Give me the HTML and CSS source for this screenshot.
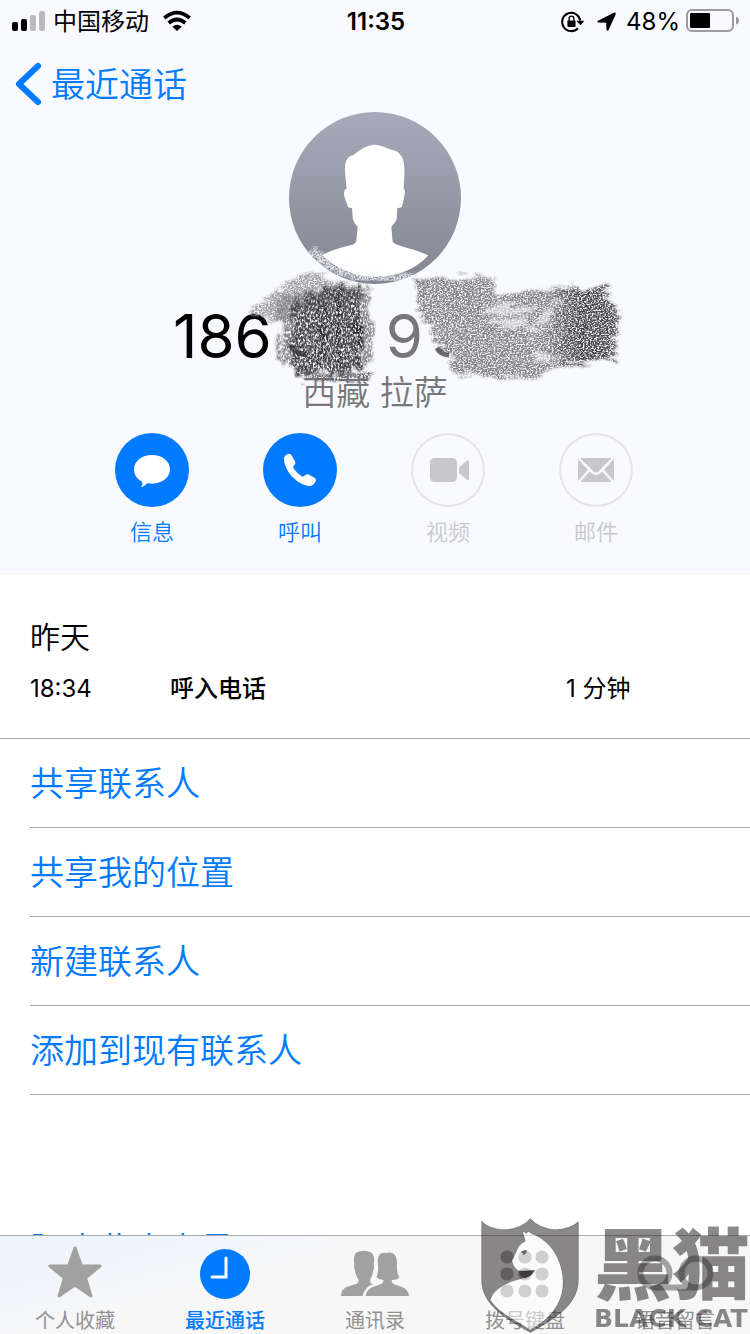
FILE: index.html
```html
<!DOCTYPE html>
<html lang="zh-CN">
<head>
<meta charset="utf-8">
<meta name="viewport" content="width=device-width, initial-scale=1">
<title>最近通话</title>
<link rel="stylesheet" href="styles.css">
</head>
<body>
<div class="app">
  <main class="content">
    <header class="profile">
      <div class="status">
        <div class="status-left">
          <svg class="signal" viewBox="0 0 34 20" aria-hidden="true"><rect x="0" y="11" width="6" height="9" rx="2"/><rect x="9" y="8" width="6" height="12" rx="2"/><rect class="dim" x="18" y="4" width="6" height="16" rx="2"/><rect class="dim" x="27" y="0" width="6" height="20" rx="2"/></svg>
          <span class="carrier">中国移动</span>
          <svg class="wifi" viewBox="0 0 84 60" aria-hidden="true"><path d="M42 60 L28 47 Q42 35 56 47Z"/><path class="arc" d="M4 21 Q42 -11 80 21M17 36 Q42 15 67 36"/></svg>
        </div>
        <time class="clock">11:35</time>
        <div class="status-right">
          <svg class="lock" viewBox="0 0 68 62" aria-hidden="true"><path class="ring" d="M50 51 A27 27 0 1 1 57 28"/><path d="M45 29 H69 L58 42Z"/><rect x="19" y="28" width="24" height="19" rx="2"/><path class="shackle" d="M24 29 V22 a7 7 0 0 1 14 0 V29"/></svg>
          <svg class="arrow" viewBox="0 0 56 56" aria-hidden="true"><path d="M2 31 Q-1 27 4 25 L50 2 Q57 0 55 7 L34 53 Q31 57 28 53 L27 32 Z"/></svg>
          <span class="percent">48%</span>
          <svg class="battery" viewBox="0 0 54 24" aria-hidden="true"><rect class="case" x="1" y="1" width="46" height="21" rx="5"/><rect x="4" y="4" width="20" height="15" rx="1"/><path class="cap" d="M50 7.500 q3 1 3 4 q0 3 -3 4Z"/></svg>
        </div>
      </div>
      <nav class="nav">
        <a class="back" href="#recents"><svg viewBox="0 0 24 42" aria-hidden="true"><path d="M21 3 L2 21 L21 39"/></svg><span>最近通话</span></a>
      </nav>
      <svg class="avatar" viewBox="57 36 516 516" role="img" aria-label="头像">
        <defs><linearGradient id="shade" x1="0" y1="0" x2="0" y2="1"><stop offset="0" stop-color="#a5abba"/><stop offset="1" stop-color="#828691"/></linearGradient></defs>
        <circle cx="315" cy="294" r="258" fill="url(#shade)"/>
        <path fill="#fff" d="M315 134C340 136 355 148 378 153C400 165 405 190 403 225L401 266Q406 268 404 280C402 300 398 312 395 322L382 325C380 340 382 355 378 363L364 380L368 425Q372 432 400 440Q440 450 475 466C440 505 390 530 315 530C250 530 190 500 157 465Q190 448 240 436Q258 432 259 422L263 380Q248 365 248 350L246 325L234 322C230 305 222 295 222 280Q222 268 230 266C226 230 222 200 228 185Q232 170 250 165C270 150 290 134 315 134Z"/>
      </svg>
      <h1 class="number"><span>186</span><span class="faded">9</span>
        <svg class="scribble" viewBox="0 0 380 150" aria-hidden="true">
          <defs>
            <filter id="chalk" x="-5%" y="-5%" width="110%" height="110%" color-interpolation-filters="sRGB">
              <feTurbulence type="fractalNoise" baseFrequency=".55 .7" numOctaves="4" seed="4" result="n"/>
              <feColorMatrix in="n" values="0 0 0 0 0 0 0 0 0 0 0 0 0 0 0 3.4 0 0 0 -1" result="holes"/>
              <feTurbulence type="fractalNoise" baseFrequency=".04 .25" numOctaves="3" seed="8" result="edge"/>
              <feDisplacementMap in="SourceGraphic" in2="edge" scale="20" xChannelSelector="R" yChannelSelector="G" result="rough"/>
              <feGaussianBlur in="rough" stdDeviation="1.2" result="soft"/>
              <feComposite in="soft" in2="holes" operator="in"/>
            </filter>
            <filter id="hatch" x="-5%" y="-5%" width="110%" height="110%" color-interpolation-filters="sRGB">
              <feTurbulence type="fractalNoise" baseFrequency=".6 .35" numOctaves="4" seed="12" result="n"/>
              <feColorMatrix in="n" values="0 0 0 0 0 0 0 0 0 0 0 0 0 0 0 3.2 0 0 0 -.85" result="holes"/>
              <feTurbulence type="fractalNoise" baseFrequency=".2 .05" numOctaves="3" seed="3" result="edge"/>
              <feDisplacementMap in="SourceGraphic" in2="edge" scale="20" xChannelSelector="R" yChannelSelector="G" result="rough"/>
              <feGaussianBlur in="rough" stdDeviation="1.2" result="soft"/>
              <feComposite in="soft" in2="holes" operator="in"/>
            </filter>
            <linearGradient id="fade"><stop offset="0" stop-color="#3c3c3e" stop-opacity="0"/><stop offset=".45" stop-color="#3c3c3e" stop-opacity=".9"/><stop offset="1" stop-color="#3c3c3e" stop-opacity=".8"/></linearGradient>
          </defs>
          <path class="erase" filter="url(#chalk)" d="M64 8Q100 44 168 38"/>
          <g filter="url(#chalk)">
            <path fill="#a0a0a4" d="M2 72L66 27L84 38L125 46L118 60L60 68L28 84Z"/>
            <path fill="#858588" d="M168 37H248L252 58L290 50L345 48L368 68L365 120L310 126L292 137H245L208 131L205 118L190 100L174 72Z"/>
            <path class="light" d="M240 70H290M244 82H280M284 95L316 60M290 118H312"/>
            <path fill="url(#fade)" d="M300 47H364V60L374 72L370 120L300 124L306 85Z"/>
            <path fill="#66666a" d="M48 132H125V140H60Z"/>
          </g>
          <g filter="url(#hatch)">
            <path fill="#8a8a8d" d="M34 52H126V125H34Z"/>
            <path fill="#4a4a4d" d="M48 62L70 52L116 44V126L98 134H56L46 122Z"/>
            <path class="streak" d="M113 46V122M76 60V126M94 56V128"/>
          </g>
          <path class="digit" d="M45 105Q50 114 60 114M192 108Q196 115 204 115"/>
        </svg>
      </h1>
      <p class="region">西藏 拉萨</p>
      <div class="actions">
        <button class="action" type="button"><span class="disc"><svg viewBox="0 0 222 222" aria-hidden="true"><path d="M111 66C141 66 165 84 165 109C165 134 141 152 111 152C104 152 101 151 97 151C91 158 83 162 77 162C83 157 84 151 81 146C67 139 57 126 57 109C57 84 81 66 111 66Z"/></svg></span>信息</button>
        <button class="action" type="button"><span class="disc"><svg viewBox="0 0 222 222" aria-hidden="true"><path d="M75 63Q83 61 87 69L97 87Q99 93 92 98Q88 101 93 108Q105 124 116 130Q121 132 124 128Q129 122 136 124L154 134Q161 138 158 145Q151 160 137 159C102 155 62 113 63 76Q64 67 75 63Z"/></svg></span>呼叫</button>
        <button class="action" type="button" disabled><span class="disc"><svg viewBox="0 0 222 222" aria-hidden="true"><rect x="57" y="75" width="81" height="72" rx="14"/><path d="M144 103L166 84Q174 78 174 86V137Q174 145 166 139L144 121Z"/></svg></span>视频</button>
        <button class="action" type="button" disabled><span class="disc"><svg viewBox="0 0 222 222" aria-hidden="true"><path d="M63 75H158L117 117Q111 122 105 117ZM57 77L87 110L57 144ZM165 77L135 110L165 144ZM64 147L92 115L101 123Q111 130 121 123L130 115L158 147Z"/></svg></span>邮件</button>
      </div>
    </header>

    <section class="history">
      <h2 class="day">昨天</h2>
      <table class="calls"><tbody><tr><td class="time">18:34</td><td class="kind">呼入电话</td><td class="length">1 分钟</td></tr></tbody></table>
    </section>

    <ul class="options">
      <li><button type="button">共享联系人</button></li>
      <li><button type="button">共享我的位置</button></li>
      <li><button type="button">新建联系人</button></li>
      <li><button type="button">添加到现有联系人</button></li>
      <li class="block"><button type="button">阻止此来电号码</button></li>
    </ul>
  </main>

  <footer class="tabbar">
    <nav class="tabs">
      <a class="tab" href="#favorites"><svg viewBox="0 0 70 52" aria-hidden="true"><path class="star" d="M35 0L41.500 18H60L45.500 30L51 48L35 37L19 48L24.500 30L10 18H28.500Z"/></svg>个人收藏</a>
      <a class="tab active" href="#recents" aria-current="page"><svg viewBox="0 0 70 52" aria-hidden="true"><circle cx="35" cy="26" r="25"/><path class="hands" d="M36 10V29H22"/></svg>最近通话</a>
      <a class="tab" href="#contacts"><svg viewBox="0 0 210 156" aria-hidden="true"><path d="M3 144Q4 120 27 115L48 108Q57 105 56 95C49 86 46 77 45 66Q40 57 43 49C39 22 45 10 66 9Q77 6 92 13C104 22 104 35 101 49Q104 57 100 67Q99 80 91 94Q88 107 100 109Q74 116 68 144Z"/><path d="M77 144Q80 122 101 116L123 108Q132 105 130 95Q117 96 109 88Q117 74 113 40C114 22 122 12 137 15C160 8 171 22 171 45Q169 76 178 89Q169 97 155 96Q154 105 163 109L184 116Q206 124 207 144Z"/></svg>通讯录</a>
      <a class="tab" href="#keypad"><svg viewBox="0 0 70 52" aria-hidden="true"><circle cx="17" cy="9" r="6.600"/><circle cx="35" cy="9" r="6.600"/><circle cx="52" cy="9" r="6.600"/><circle cx="17" cy="26" r="6.600"/><circle cx="35" cy="26" r="6.600"/><circle cx="52" cy="26" r="6.600"/><circle cx="17" cy="43" r="6.600"/><circle cx="35" cy="43" r="6.600"/><circle cx="52" cy="43" r="6.600"/></svg>拨号键盘</a>
      <a class="tab" href="#voicemail"><svg viewBox="0 0 70 52" aria-hidden="true"><path class="reel" d="M15 39.500H56"/><circle class="reel" cx="15" cy="25" r="14.500"/><circle class="reel" cx="56" cy="25" r="14.500"/></svg>语音留言</a>
    </nav>
    <div class="watermark">
      <svg class="shield" viewBox="62 54 294 350" aria-hidden="true">
        <path class="ink" fill-rule="evenodd" d="M64 66Q85 90 135 92Q185 88 210 58Q235 88 285 92Q330 90 354 68V240C354 310 300 350 210 400C120 350 64 310 64 240ZM187 97L194 122Q197 128 188 130C170 140 168 165 155 183Q157 203 176 216L222 214Q216 230 195 236C150 245 100 265 90 303C120 345 170 365 210 392C260 365 308 320 308 250C307 170 260 120 214 104L203 96L200 103Z"/>
        <path class="fur" d="M187 97L194 122Q197 128 188 130C170 140 168 165 155 183Q157 203 176 216L222 214Q216 230 195 236C150 245 100 265 90 303C120 345 170 365 210 392C260 365 308 320 308 250C307 170 260 120 214 104L203 96L200 103Z"/>
        <path class="ink" d="M176 216L222 214Q214 230 195 236Q180 232 176 216Z"/>
        <path class="eye" d="M181 158Q192 150 200 153Q199 164 191 168Q186 160 181 158Z"/>
      </svg>
      <div class="brand"><span class="brand-cn">黑猫</span><span class="brand-en">BLACK CAT</span></div>
    </div>
  </footer>
</div>
</body>
</html>
```

FILE: styles.css
```css
* { box-sizing: border-box; }

body {
  margin: 0;
  background: #fff;
  color: #000;
  font-family: Inter, "Noto Sans CJK SC", sans-serif;
}

h1, h2, p, ul { margin: 0; padding: 0; font-weight: 400; }
ul { list-style: none; }
a { color: inherit; text-decoration: none; }
button { border: 0; padding: 0; background: none; color: inherit; font: inherit; }
svg { display: block; overflow: visible; }

.app { display: flex; flex-direction: column; height: 100vh; }
.content { flex: 1; min-height: 0; overflow-y: auto; scrollbar-width: none; }

.profile {
  display: flex;
  flex-direction: column;
  align-items: center;
  padding-bottom: 25px;
  background: #f9faff;
  border-bottom: 1px solid #efeff4;
}

.status {
  display: grid;
  grid-template-columns: 1fr auto 1fr;
  align-items: center;
  width: 100%;
  height: 40px;
  padding: 0 10px 0 12px;
  font-size: 24px;
  line-height: 40px;
}
.status-left, .status-right { display: flex; align-items: center; }
.status-right { justify-content: flex-end; }
.signal { width: 34px; height: 20px; margin-right: 7px; }
.signal .dim { fill: #b9b9be; }
.carrier { padding-top: 2px; }
.wifi { width: 28px; height: 20px; margin-left: 14px; }
.wifi .arc { fill: none; stroke: #000; stroke-width: 11; }
.clock { padding-top: 2px; font-weight: 600; }
.lock { width: 23px; height: 21px; margin-right: 13px; }
.lock .ring { fill: none; stroke: #000; stroke-width: 6; }
.lock .shackle { fill: none; stroke: #000; stroke-width: 4; }
.arrow { width: 19px; height: 19px; margin-right: 10px; }
.percent { margin-right: 6px; padding-top: 2px; }
.battery { width: 54px; height: 24px; }
.battery .case { fill: none; stroke: #9b9ba0; stroke-width: 2; }
.battery .cap { fill: #9b9ba0; }

.nav { width: 100%; height: 72px; padding: 24px 17px 0; }
.back { display: inline-flex; align-items: center; gap: 10px; height: 40px; color: #007aff; font-size: 34px; font-weight: 350; line-height: 40px; }
.back svg { width: 24px; height: 42px; fill: none; stroke: #007aff; stroke-width: 6; stroke-linecap: round; stroke-linejoin: round; }
.back span { padding-top: 2px; }

.avatar { width: 172px; height: 172px; }

.number {
  position: relative;
  display: flex;
  gap: 114px;
  width: 404px;
  margin-top: 16px;
  font-size: 60px;
  line-height: 72px;
}
.number .faded { color: #77777a; }
.scribble { position: absolute; top: -60px; left: 72px; width: 380px; height: 150px; }
.scribble .erase { fill: none; stroke: #f9faff; stroke-width: 12; opacity: .8; }
.scribble .light { fill: none; stroke: #f9faff; stroke-width: 8; opacity: .6; }
.scribble .streak { fill: none; stroke: #232325; stroke-width: 5; opacity: .8; }
.scribble .digit { fill: none; stroke: #303033; stroke-width: 5; opacity: .7; }

.region { padding-top: 1px; color: #77777a; font-size: 34px; font-weight: 350; line-height: 40px; }

.actions { display: flex; gap: 74px; margin-top: 20px; padding-right: 2px; }
.action { display: flex; flex-direction: column; align-items: center; gap: 9px; width: 74px; color: #007aff; font-size: 22px; font-weight: 350; line-height: 32px; }
.disc { width: 74px; height: 74px; border-radius: 50%; background: #007aff; }
.disc svg { width: 74px; height: 74px; fill: #fff; }
.action:disabled { color: #c7c7cc; }
.action:disabled .disc { background: none; box-shadow: inset 0 0 0 2px #e5e4ea; }
.action:disabled svg { fill: #c7c7cc; }

.history { padding: 43px 0 33px 30px; border-bottom: 1px solid #a9a9ad; }
.day { font-size: 30px; font-weight: 350; line-height: 40px; }
.calls { width: 100%; margin-top: 16px; border-collapse: collapse; table-layout: fixed; font-size: 24px; line-height: 32px; }
.calls td { padding: 0; }
.time { width: 140px; }
.kind { font-weight: 500; }
.length { width: 184px; }

.options { padding-left: 30px; color: #007aff; font-size: 34px; font-weight: 350; line-height: 40px; }
.options li { border-bottom: 1px solid #a9a9ad; }
.options button { display: block; width: 100%; padding: 25px 0 23px; text-align: left; }
.options .block { margin-top: 110px; }

.tabbar {
  position: relative;
  border-top: 1px solid #a9a9ac;
  background: linear-gradient(165deg, #ebf3fd 0, #f7f7f8 36%, #f7f7f7 100%);
}
.tabs { display: grid; grid-template-columns: repeat(5, 1fr); padding: 12px 0 1px; }
.tab { display: flex; flex-direction: column; align-items: center; gap: 9px; color: #929292; font-size: 20px; line-height: 24px; }
.tab svg { width: 70px; height: 52px; fill: #a1a1a1; }
.tab.active { color: #007aff; font-weight: 500; }
.tab.active svg { fill: #007aff; }
.tab .star { stroke: #a1a1a1; stroke-width: 3; stroke-linejoin: round; }
.tab .hands { fill: none; stroke: #fff; stroke-width: 3; stroke-linecap: round; }
.tab .reel { fill: none; stroke: #a1a1a1; stroke-width: 6; }

.watermark { position: absolute; right: 0; bottom: 0; display: flex; align-items: flex-end; gap: 15px; color: #231e20; pointer-events: none; }
.shield { width: 98px; height: 117px; }
.shield .ink { fill: #231e20; fill-opacity: .52; stroke: #231e20; stroke-opacity: .3; stroke-width: 3; }
.shield .fur { fill: #fff; fill-opacity: .5; }
.shield .eye { fill: #231e20; fill-opacity: .6; }
.brand { display: flex; flex-direction: column; width: 156px; padding-bottom: 3px; opacity: .52; }
.brand-cn { font-size: 78px; font-weight: 900; line-height: 82px; }
.brand-en { font-family: "DejaVu Sans", sans-serif; font-size: 25px; font-weight: 700; line-height: 24px; white-space: nowrap; }
```
